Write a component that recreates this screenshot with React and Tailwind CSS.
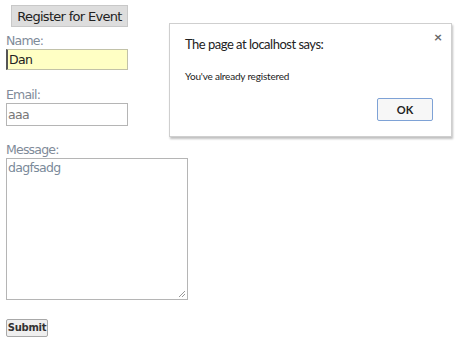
export default function App() {
  const f = { fontFamily: '"DejaVu Sans", Verdana, sans-serif' };
  return (
    <div className="relative w-[474px] h-[343px] bg-white overflow-hidden">
      <div className="flex flex-col items-start pl-[6px] pt-[5px]" style={f}>
        <button className="ml-[5px] w-[117px] h-[22px] bg-[#dddddd] border border-[#c8c8c8] text-[13px] text-[#222] leading-none tracking-[-0.7px]">
          Register for Event
        </button>
        <div className="mt-[6px] text-[12.5px] text-[#7f8b99] leading-[16px] tracking-[-0.8px]">Name:</div>
        <div className="w-[122px] h-[21px] bg-[#ffffc4] border border-[#c2c2a8] border-l-[#555] border-l-2 text-[12.5px] text-[#222] leading-[19px] pl-[1px] tracking-[-0.7px]">Dan</div>
        <div className="mt-[17px] text-[12.5px] text-[#7f8b99] leading-[16px] tracking-[-0.8px]">Email:</div>
        <div className="w-[122px] h-[23px] bg-white border border-[#b5b5b5] text-[12.5px] text-[#777] leading-[21px] pl-[1px] tracking-[-0.7px]">aaa</div>
        <div className="mt-[16px] text-[12.5px] text-[#7f8b99] leading-[16px] tracking-[-0.8px]">Message:</div>
        <div className="relative w-[182px] h-[142px] bg-white border border-[#b5b5b5] text-[12.5px] text-[#7a8a9a] pl-[1px] pt-[1px] leading-[16px] tracking-[-0.7px]">
          dagfsadg
          <svg className="absolute right-[1px] bottom-[1px]" width="8" height="8" viewBox="0 0 8 8">
            <path d="M7 1 L1 7 M7 4 L4 7" stroke="#999" strokeWidth="1" />
          </svg>
        </div>
        <button className="mt-[19px] w-[42px] h-[18px] bg-[#efefef] border border-[#a8a8a8] rounded-[2px] text-[10px] font-bold text-[#333] leading-none tracking-[-0.3px]">
          Submit
        </button>
      </div>
      <div
        className="absolute left-[169px] top-[23px] w-[283px] h-[114px] bg-white border border-[#cfcfcf] shadow-[1px_2px_2px_rgba(0,0,0,0.25)] flex flex-col pl-[15px] pr-[18px]"
        style={{ fontFamily: 'Lato, "Open Sans", sans-serif' }}
      >
        <div className="absolute right-[9px] top-[2px] text-[14px] text-[#666] font-bold">×</div>
        <div className="mt-[11px] text-[13px] leading-[18px] text-[#222] tracking-[-0.5px]">The page at localhost says:</div>
        <div className="mt-[17px] text-[10px] leading-[13px] text-[#222] tracking-[-0.2px]">You've already registered</div>
        <button className="self-end mt-[15px] w-[56px] h-[23px] bg-[#f7f7f7] border border-[#7ea2d6] rounded-[2px] text-[11px] font-bold text-[#222] leading-none">
          OK
        </button>
      </div>
    </div>
  );
}
